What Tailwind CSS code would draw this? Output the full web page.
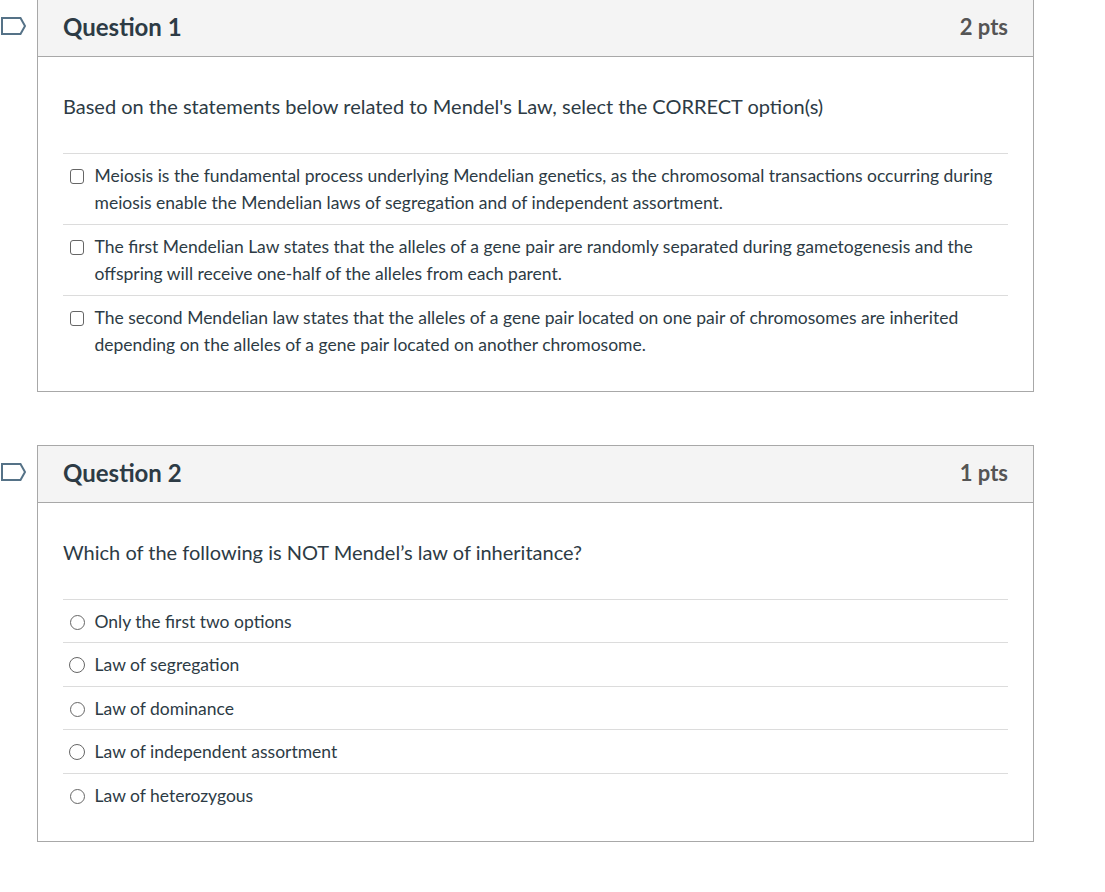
<!DOCTYPE html>
<html lang="en">

<head>
  <meta charset="UTF-8" />
  <title>Quiz</title>
  <script src="https://cdn.jsdelivr.net/npm/@tailwindcss/browser@4"></script>
</head>

<body class="bg-white font-['Lato',sans-serif] text-[#2d3b45] h-[892px] overflow-hidden">
  <div class="w-[1034px] -mt-px">

    <!-- question 1 -->
    <div class="flex items-start">
      <div class="w-[37px] shrink-0 pt-[18px]">
        <svg class="block" width="26" height="18" viewBox="0 0 26 18" fill="none">
          <path d="M2 1H20.5L25 9L20.5 17H2Z" fill="#fff" stroke="#557287" stroke-width="2" />
        </svg>
      </div>
      <div class="flex-1 border border-[#a8a8a8]">
        <div class="h-[56px] bg-[#f4f4f4] flex items-center justify-between px-[25px] pb-[2px]">
          <h2 class="text-[24px] font-bold text-[#2d3b45] leading-none">Question 1</h2>
          <span class="text-[22px] font-bold text-[#555] leading-none">2 pts</span>
        </div>
        <div class="border-t border-[#a8a8a8] px-[25px] pt-[37px] pb-[25px]">
          <p class="text-[20px] leading-[24px] mb-[35px]">Based on the statements below related to Mendel's Law, select the CORRECT option(s)</p>
          <div class="border-t border-[#dcdcdc] flex items-start pt-[8px] pb-[8px] pl-[7px]">
            <span class="w-[14px] h-[15px] mt-[7px] mr-[10.5px] shrink-0 rounded-[3px] border-[1.5px] border-[#666]"></span>
            <p class="text-[17.5px] leading-[27px]">Meiosis is the fundamental process underlying Mendelian genetics, as the chromosomal transactions occurring during meiosis enable the Mendelian laws of segregation and of independent assortment.</p>
          </div>
          <div class="border-t border-[#dcdcdc] flex items-start pt-[8px] pb-[8px] pl-[7px]">
            <span class="w-[14px] h-[15px] mt-[7px] mr-[10.5px] shrink-0 rounded-[3px] border-[1.5px] border-[#666]"></span>
            <p class="text-[17.5px] leading-[27px]">The first Mendelian Law states that the alleles of a gene pair are randomly separated during gametogenesis and the offspring will receive one-half of the alleles from each parent.</p>
          </div>
          <div class="border-t border-[#dcdcdc] flex items-start pt-[8px] pb-[8px] pl-[7px]">
            <span class="w-[14px] h-[15px] mt-[7px] mr-[10.5px] shrink-0 rounded-[3px] border-[1.5px] border-[#666]"></span>
            <p class="text-[17.5px] leading-[27px]">The second Mendelian law states that the alleles of a gene pair located on one pair of chromosomes are inherited depending on the alleles of a gene pair located on another chromosome.</p>
          </div>
        </div>
      </div>
    </div>

    <!-- question 2 -->
    <div class="flex items-start mt-[53px]">
      <div class="w-[37px] shrink-0 pt-[18px]">
        <svg class="block" width="26" height="18" viewBox="0 0 26 18" fill="none">
          <path d="M2 1H20.5L25 9L20.5 17H2Z" fill="#fff" stroke="#557287" stroke-width="2" />
        </svg>
      </div>
      <div class="flex-1 border border-[#a8a8a8]">
        <div class="h-[56px] bg-[#f4f4f4] flex items-center justify-between px-[25px] pb-[2px]">
          <h2 class="text-[24px] font-bold text-[#2d3b45] leading-none">Question 2</h2>
          <span class="text-[22px] font-bold text-[#555] leading-none">1 pts</span>
        </div>
        <div class="border-t border-[#a8a8a8] px-[25px] pt-[37px] pb-[25px]">
          <p class="text-[20px] leading-[24px] mb-[35px]">Which of the following is NOT Mendel’s law of inheritance?</p>
          <div class="border-t border-[#dcdcdc] h-[43px] pt-[2px] flex items-center pl-[7px]">
            <span class="w-[15px] h-[15px] mr-[9.5px] shrink-0 rounded-full border-[1.5px] border-[#666]"></span>
            <p class="text-[17.5px]">Only the first two options</p>
          </div>
          <div class="border-t border-[#dcdcdc] h-[44px] pt-[1px] flex items-center pl-[6px]">
            <span class="w-[16px] h-[16px] mr-[9.5px] shrink-0 rounded-full border-[1.5px] border-[#666]"></span>
            <p class="text-[17.5px]">Law of segregation</p>
          </div>
          <div class="border-t border-[#dcdcdc] h-[43px] pt-[2px] flex items-center pl-[7px]">
            <span class="w-[15px] h-[15px] mr-[9.5px] shrink-0 rounded-full border-[1.5px] border-[#666]"></span>
            <p class="text-[17.5px]">Law of dominance</p>
          </div>
          <div class="border-t border-[#dcdcdc] h-[44px] pt-[1px] flex items-center pl-[6px]">
            <span class="w-[16px] h-[16px] mr-[9.5px] shrink-0 rounded-full border-[1.5px] border-[#666]"></span>
            <p class="text-[17.5px]">Law of independent assortment</p>
          </div>
          <div class="border-t border-[#dcdcdc] h-[43px] pt-[2px] flex items-center pl-[7px]">
            <span class="w-[15px] h-[15px] mr-[9.5px] shrink-0 rounded-full border-[1.5px] border-[#666]"></span>
            <p class="text-[17.5px]">Law of heterozygous</p>
          </div>
        </div>
      </div>
    </div>
  </div>
</body>

</html>
